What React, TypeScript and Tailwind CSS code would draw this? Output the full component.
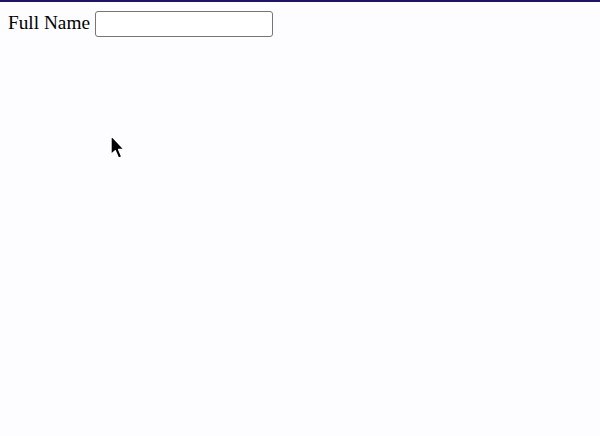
export default function App() {
  return (
    <div className="relative w-[600px] h-[436px] overflow-hidden bg-[#fdfcff] border-t-2 border-[#1e1466] font-['Liberation_Serif',serif] text-black">
      <div className="flex items-center px-2 pt-[9px]">
        <label className="text-[19.3px] leading-6 -mt-[2px]">Full Name</label>
        <input
          type="text"
          className="ml-[5px] w-[178px] h-[26px] rounded-[3px] border border-[#767676] bg-white"
        />
      </div>

      {/* mouse pointer */}
      <svg
        className="absolute left-[109px] top-[132px]"
        width="18"
        height="28"
        viewBox="0 0 16 26"
      >
        <path
          d="M1.5 1.5 L1.5 19 L5.5 15.5 L8.5 22.5 L11.5 21.2 L8.6 14.3 L13.8 14.3 Z"
          fill="#000"
          stroke="#fff"
          strokeWidth="1.3"
          strokeLinejoin="round"
        />
      </svg>
    </div>
  )
}
